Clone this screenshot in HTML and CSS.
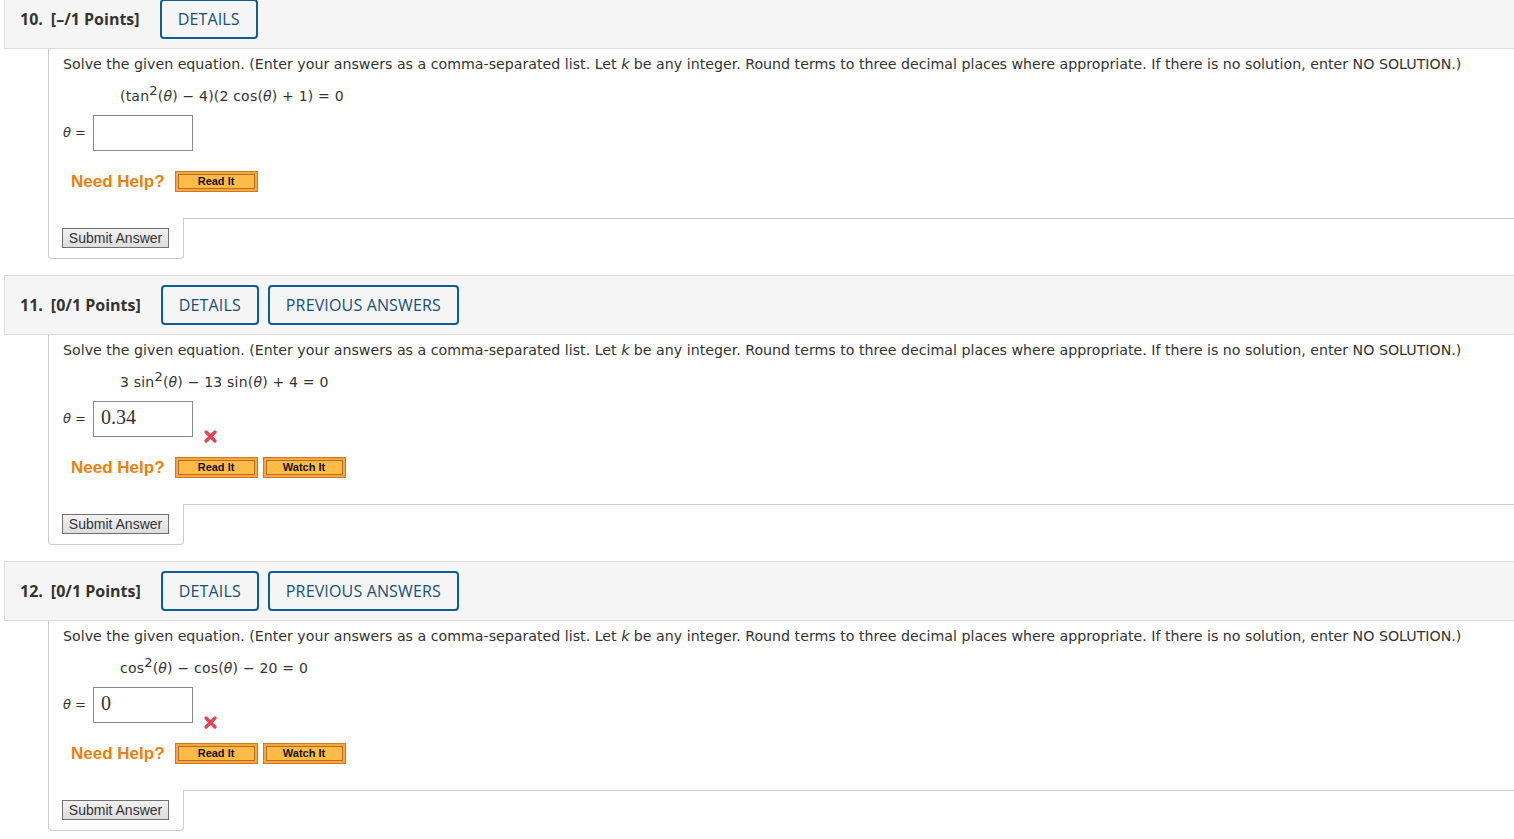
FILE: index.html
```html
<!DOCTYPE html>
<html>
<head>
<meta charset="utf-8">
<link rel="stylesheet" href="styles.css">
</head>
<body>
<div class="page">

  <div class="question">
    <div class="q-header">
      <span class="q-num">10.</span><span class="q-points">[–/1 Points]</span>
      <span class="q-btn">DETAILS</span>
    </div>
    <div class="q-content">
      <p class="q-text">Solve the given equation. (Enter your answers as a comma-separated list. Let <i>k</i> be any integer. Round terms to three decimal places where appropriate. If there is no solution, enter NO SOLUTION.)</p>
      <p class="q-eq">(tan<sup>2</sup>(<i class="th">θ</i>) − 4)(2 cos(<i class="th">θ</i>) + 1) = 0</p>
      <div class="q-answer">
        <span class="ans-label"><i class="th">θ</i> =</span>
        <span class="ans-box"></span>
      </div>
      <div class="q-help">
        <span class="need-help">Need Help?</span>
        <span class="help-btn"><span class="help-inner">Read It</span></span>
      </div>
    </div>
    <div class="q-footer">
      <div class="submit-box"><span class="submit-btn">Submit Answer</span></div>
      <div class="filler"></div>
    </div>
  </div>

  <div class="question">
    <div class="q-header">
      <span class="q-num">11.</span><span class="q-points">[0/1 Points]</span>
      <span class="q-btn">DETAILS</span>
      <span class="q-btn">PREVIOUS ANSWERS</span>
    </div>
    <div class="q-content">
      <p class="q-text">Solve the given equation. (Enter your answers as a comma-separated list. Let <i>k</i> be any integer. Round terms to three decimal places where appropriate. If there is no solution, enter NO SOLUTION.)</p>
      <p class="q-eq">3 sin<sup>2</sup>(<i class="th">θ</i>) − 13 sin(<i class="th">θ</i>) + 4 = 0</p>
      <div class="q-answer">
        <span class="ans-label"><i class="th">θ</i> =</span>
        <span class="ans-box">0.34</span>
        <svg class="wrong" width="15" height="15" viewBox="0 0 15 15"><path d="M3 3 L12 12 M12 3 L3 12" stroke="#ee3f4f" stroke-width="3.2" stroke-linecap="round" fill="none"/></svg>
      </div>
      <div class="q-help">
        <span class="need-help">Need Help?</span>
        <span class="help-btn"><span class="help-inner">Read It</span></span>
        <span class="help-btn"><span class="help-inner">Watch It</span></span>
      </div>
    </div>
    <div class="q-footer">
      <div class="submit-box"><span class="submit-btn">Submit Answer</span></div>
      <div class="filler"></div>
    </div>
  </div>

  <div class="question">
    <div class="q-header">
      <span class="q-num">12.</span><span class="q-points">[0/1 Points]</span>
      <span class="q-btn">DETAILS</span>
      <span class="q-btn">PREVIOUS ANSWERS</span>
    </div>
    <div class="q-content">
      <p class="q-text">Solve the given equation. (Enter your answers as a comma-separated list. Let <i>k</i> be any integer. Round terms to three decimal places where appropriate. If there is no solution, enter NO SOLUTION.)</p>
      <p class="q-eq">cos<sup>2</sup>(<i class="th">θ</i>) − cos(<i class="th">θ</i>) − 20 = 0</p>
      <div class="q-answer">
        <span class="ans-label"><i class="th">θ</i> =</span>
        <span class="ans-box">0</span>
        <svg class="wrong" width="15" height="15" viewBox="0 0 15 15"><path d="M3 3 L12 12 M12 3 L3 12" stroke="#ee3f4f" stroke-width="3.2" stroke-linecap="round" fill="none"/></svg>
      </div>
      <div class="q-help">
        <span class="need-help">Need Help?</span>
        <span class="help-btn"><span class="help-inner">Read It</span></span>
        <span class="help-btn"><span class="help-inner">Watch It</span></span>
      </div>
    </div>
    <div class="q-footer">
      <div class="submit-box"><span class="submit-btn">Submit Answer</span></div>
      <div class="filler"></div>
    </div>
  </div>

</div>
</body>
</html>
```

FILE: styles.css
```css
html, body {
  margin: 0;
  padding: 0;
  background: #ffffff;
  overflow: hidden;
}
.page {
  margin-top: -11px;
  padding-left: 4px;
  font-family: "DejaVu Sans", Verdana, sans-serif;
  color: #333333;
}
.question {
  margin-bottom: 16px;
}
.q-header {
  display: flex;
  align-items: center;
  height: 58px;
  background: #f5f5f5;
  border: 1px solid #dddddd;
  border-right: none;
  padding-left: 15px;
  font-family: "Open Sans", sans-serif;
}
.q-num {
  font-weight: 700;
  font-size: 16px;
  color: #333;
  margin-right: 8px;
}
.q-points {
  font-weight: 700;
  font-size: 16px;
  color: #333;
  margin-right: 20px;
}
.q-btn {
  display: inline-flex;
  align-items: center;
  justify-content: center;
  height: 36px;
  padding: 0 16px;
  border: 2px solid #0b5e96;
  border-radius: 4px;
  font-size: 16px;
  letter-spacing: 0.15px;
  color: #174f7d;
  margin-right: 9px;
  background: transparent;
}
.q-content {
  margin-left: 44px;
  border-left: 1px solid #cccccc;
  padding: 6px 0 26px 14px;
}
.q-text {
  margin: 0;
  font-size: 14.2px;
  line-height: 18px;
  color: #333;
}
.q-eq {
  margin: 14px 0 0 57px;
  font-size: 14px;
  letter-spacing: 0.2px;
  line-height: 18px;
}
.q-eq sup {
  font-size: 13px;
  line-height: 0;
  vertical-align: 6px;
}
.th {
  font-family: "DejaVu Sans", sans-serif;
  font-style: italic;
}
.q-answer {
  display: flex;
  align-items: flex-start;
  margin-top: 10px;
  height: 36px;
}
.ans-label {
  font-size: 13px;
  line-height: 36px;
  margin-right: 7px;
}
.ans-box {
  box-sizing: border-box;
  width: 100px;
  height: 36px;
  border: 1px solid #888888;
  font-family: "Liberation Serif", "Times New Roman", serif;
  font-size: 20px;
  line-height: 30px;
  padding-left: 7px;
  color: #333;
}
.wrong {
  margin-left: 10px;
  margin-top: 28px;
}
.q-help {
  display: flex;
  align-items: center;
  margin-top: 20px;
  margin-left: 8px;
  height: 21px;
}
.need-help {
  font-family: "Liberation Sans", Arial, sans-serif;
  font-weight: 700;
  font-size: 17px;
  color: #ee7f0a;
  margin-right: 10px;
}
.help-btn {
  box-sizing: border-box;
  display: inline-block;
  width: 83px;
  height: 21px;
  padding: 2px;
  background: #fda43a;
  border: 1px solid #cf7a22;
  margin-right: 5px;
}
.help-inner {
  box-sizing: border-box;
  display: block;
  height: 15px;
  border: 1px solid #b26f26;
  background: #ffbb45;
  font-family: "Liberation Sans", Arial, sans-serif;
  font-weight: 700;
  font-size: 11px;
  line-height: 13px;
  text-align: center;
  color: #111;
}
.q-footer {
  display: flex;
  margin-left: 44px;
}
.submit-box {
  width: 136px;
  box-sizing: border-box;
  height: 41px;
  border: 1px solid #cccccc;
  border-top: none;
  border-radius: 0 0 4px 4px;
  padding: 10px 0 0 13px;
}
.filler {
  flex: 1;
  border-top: 1px solid #cccccc;
}
.submit-btn {
  box-sizing: border-box;
  display: inline-block;
  width: 107px;
  height: 20px;
  border: 1px solid #707070;
  background: linear-gradient(#f2f2f2, #dddddd);
  font-family: "Liberation Sans", Arial, sans-serif;
  font-size: 14px;
  line-height: 18px;
  text-align: center;
  color: #333;
}
```
